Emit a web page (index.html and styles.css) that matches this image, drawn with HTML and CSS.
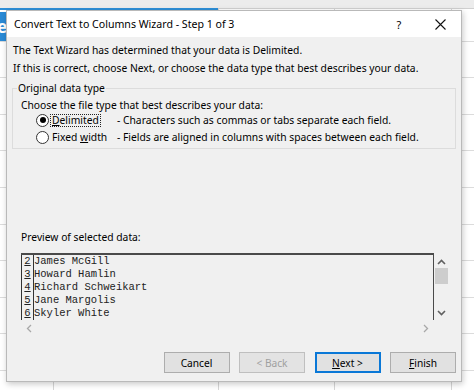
FILE: index.html
```
<!DOCTYPE html>
<html>
<head>
<meta charset="utf-8">
<link rel="stylesheet" href="styles.css">
</head>
<body>
<div class="sheet-header"><div class="sel-line"></div></div>
<div class="cell-e">e</div>
<div class="dialog">
  <div class="titlebar">
    <span class="title">Convert Text to Columns Wizard - Step 1 of 3</span>
    <span class="help">?</span>
    <span class="close"><svg width="11" height="11" viewBox="0 0 11 11"><path d="M0.5 0.5 L10.5 10.5 M10.5 0.5 L0.5 10.5" stroke="#111" stroke-width="1.1" fill="none"/></svg></span>
  </div>
  <div class="content">
    <p class="intro first">The Text Wizard has determined that your data is Delimited.</p>
    <p class="intro">If this is correct, choose Next, or choose the data type that best describes your data.</p>
    <fieldset class="group">
      <legend>Original data type</legend>
      <p class="choose">Choose the file type that best describes your data:</p>
      <div class="options">
        <span class="radio checked"></span>
        <span class="opt"><span class="focus"><u>D</u>elimited</span></span>
        <span class="desc">- Characters such as commas or tabs separate each field.</span>
        <span class="radio"></span>
        <span class="opt"><span class="plain">Fixed <u>w</u>idth</span></span>
        <span class="desc">- Fields are aligned in columns with spaces between each field.</span>
      </div>
    </fieldset>
    <p class="preview-label">Preview of selected data:</p>
    <div class="preview">
      <div class="preview-main">
        <div class="data">
          <div class="row"><span class="num">2</span><span class="txt">James McGill</span></div>
          <div class="row"><span class="num">3</span><span class="txt">Howard Hamlin</span></div>
          <div class="row"><span class="num">4</span><span class="txt">Richard Schweikart</span></div>
          <div class="row"><span class="num">5</span><span class="txt">Jane Margolis</span></div>
          <div class="row"><span class="num">6</span><span class="txt">Skyler White</span></div>
          <div class="row"><span class="num"></span></div>
        </div>
        <div class="vscroll">
          <svg class="arrow" width="9" height="6" viewBox="0 0 9 6"><path d="M1 5 L4.5 1.5 L8 5" stroke="#606060" stroke-width="1.6" fill="none"/></svg>
          <div class="thumb"></div>
          <div class="vspace"></div>
          <svg class="arrow" width="9" height="6" viewBox="0 0 9 6"><path d="M1 1 L4.5 4.5 L8 1" stroke="#606060" stroke-width="1.6" fill="none"/></svg>
        </div>
      </div>
      <div class="hscroll">
        <svg width="6" height="9" viewBox="0 0 6 9"><path d="M5 1 L1.5 4.5 L5 8" stroke="#a8a8a8" stroke-width="1.3" fill="none"/></svg>
        <svg width="6" height="9" viewBox="0 0 6 9"><path d="M1 1 L4.5 4.5 L1 8" stroke="#a8a8a8" stroke-width="1.3" fill="none"/></svg>
      </div>
    </div>
    <div class="buttons">
      <button class="btn">Cancel</button>
      <button class="btn disabled">&lt; Back</button>
      <button class="btn default"><u>N</u>ext &gt;</button>
      <button class="btn"><u>F</u>inish</button>
    </div>
  </div>
</div>
</body>
</html>
```
FILE: styles.css
```
html, body {
  margin: 0;
  padding: 0;
}
body {
  width: 474px;
  height: 390px;
  overflow: hidden;
  position: relative;
  font-family: "Noto Sans", "Open Sans", sans-serif;
  color: #000;
  background:
    linear-gradient(#d6d6d6, #d6d6d6) 53px 0 / 1px 100% no-repeat,
    linear-gradient(#d6d6d6, #d6d6d6) 218px 0 / 1px 100% no-repeat,
    linear-gradient(#d6d6d6, #d6d6d6) 334px 0 / 1px 100% no-repeat,
    linear-gradient(#d6d6d6, #d6d6d6) 451px 0 / 1px 100% no-repeat,
    repeating-linear-gradient(to bottom, #dcdcdc 0 1px, transparent 1px 36.6px) 0 4px / 100% 100%,
    #ffffff;
}
.sheet-header {
  height: 8px;
  background: #ececec;
  border-bottom: 1px solid #d0d0d0;
  position: relative;
}
.sel-line {
  position: absolute;
  left: 0;
  bottom: -2px;
  width: 218px;
  height: 2px;
  background: #2e8fd8;
}
.cell-e {
  position: absolute;
  left: 0;
  top: 12px;
  width: 7px;
  height: 29px;
  background: #2a8ad6;
  color: #fff;
  font-weight: bold;
  font-size: 17px;
  line-height: 29px;
  overflow: hidden;
  text-indent: -3px;
}
.dialog {
  position: absolute;
  left: 6px;
  top: 10px;
  width: 456px;
  height: 372px;
  box-sizing: border-box;
  border: 1px solid #b9b9b9;
  background: #f0f0f0;
  box-shadow: 1px 2px 6px rgba(0, 0, 0, 0.22);
  display: flex;
  flex-direction: column;
}
.titlebar {
  height: 26px;
  background: #fff;
  display: flex;
  align-items: center;
  padding-left: 7px;
  flex: none;
}
.title {
  font-size: 10.6px;
  flex: 1;
}
.help {
  font-size: 11px;
  width: 12px;
  text-align: center;
  margin-right: 30px;
}
.close {
  width: 11px;
  height: 11px;
  margin-right: 15px;
  display: flex;
}
.content {
  padding: 4px 5px 0 5px;
  font-size: 10.3px;
  flex: 1;
}
p {
  margin: 0;
}
.intro {
  line-height: 18px;
  padding-left: 1px;
}
.group {
  margin: 2px 0 0 0;
  padding: 0 0 3px 4px;
  border: 1px solid #dcdcdc;
  min-width: 0;
}
.group legend {
  padding: 0 1px;
  line-height: 18px;
}
.choose {
  margin-top: 1px;
  line-height: 14px;
  padding-left: 4px;
}
.options {
  display: grid;
  grid-template-columns: 13px 68px auto;
  grid-auto-rows: 16px;
  row-gap: 1px;
  align-items: center;
  margin-left: 19px;
}
.radio {
  width: 13px;
  height: 13px;
  box-sizing: border-box;
  border: 1px solid #333;
  border-radius: 50%;
  background: #fff;
  display: flex;
  align-items: center;
  justify-content: center;
}
.radio.checked::after {
  content: "";
  width: 6px;
  height: 6px;
  border-radius: 50%;
  background: #000;
}
.opt {
  display: flex;
  align-items: center;
  padding-left: 1px;
}
.focus {
  border: 1px dotted #222;
  padding: 0 1px;
  line-height: 11px;
}
.plain {
  padding: 0 2px;
}
.preview-label {
  margin-top: 79px;
  line-height: 18px;
  padding-left: 9px;
}
.preview {
  margin: 7px 0 0 9px;
  width: 427px;
}
.preview-main {
  display: flex;
  height: 67px;
}
.data {
  flex: 1;
  border-top: 2px solid #4a4a4a;
  border-right: 1px solid #4a4a4a;
  overflow: hidden;
  font-family: "Liberation Mono", "Courier New", monospace;
  font-size: 10.5px;
  color: #222;
}
.row {
  display: flex;
  height: 13px;
  line-height: 13px;
}
.num {
  width: 11px;
  border-left: 1px solid #333;
  border-right: 1px solid #333;
  text-align: center;
  text-decoration: underline;
  text-underline-offset: 1px;
  flex: none;
}
.txt {
  white-space: pre;
}
.vscroll {
  width: 14px;
  display: flex;
  flex-direction: column;
  align-items: center;
  padding-top: 6px;
  box-sizing: border-box;
}
.vscroll .arrow {
  flex: none;
}
.thumb {
  width: 13px;
  height: 16px;
  background: #cdcdcd;
  margin-top: 3px;
}
.vspace {
  flex: 1;
}
.vscroll .arrow:last-child {
  margin-bottom: 4px;
}
.hscroll {
  height: 17px;
  display: flex;
  justify-content: space-between;
  align-items: center;
  padding: 0 19px 0 5px;
}
.buttons {
  display: flex;
  justify-content: flex-end;
  gap: 9.5px;
  margin-top: 15px;
}
.btn {
  width: 66px;
  height: 21px;
  box-sizing: border-box;
  border: 1px solid #adadad;
  background: #e1e1e1;
  font-family: "Noto Sans", "Open Sans", sans-serif;
  font-size: 10.2px;
  color: #000;
  padding: 0;
}
.btn.disabled {
  color: #a0a0a0;
  border-color: #bfbfbf;
  background: #e3e3e3;
}
.btn.default {
  border: 2px solid #0a78d7;
}
```
